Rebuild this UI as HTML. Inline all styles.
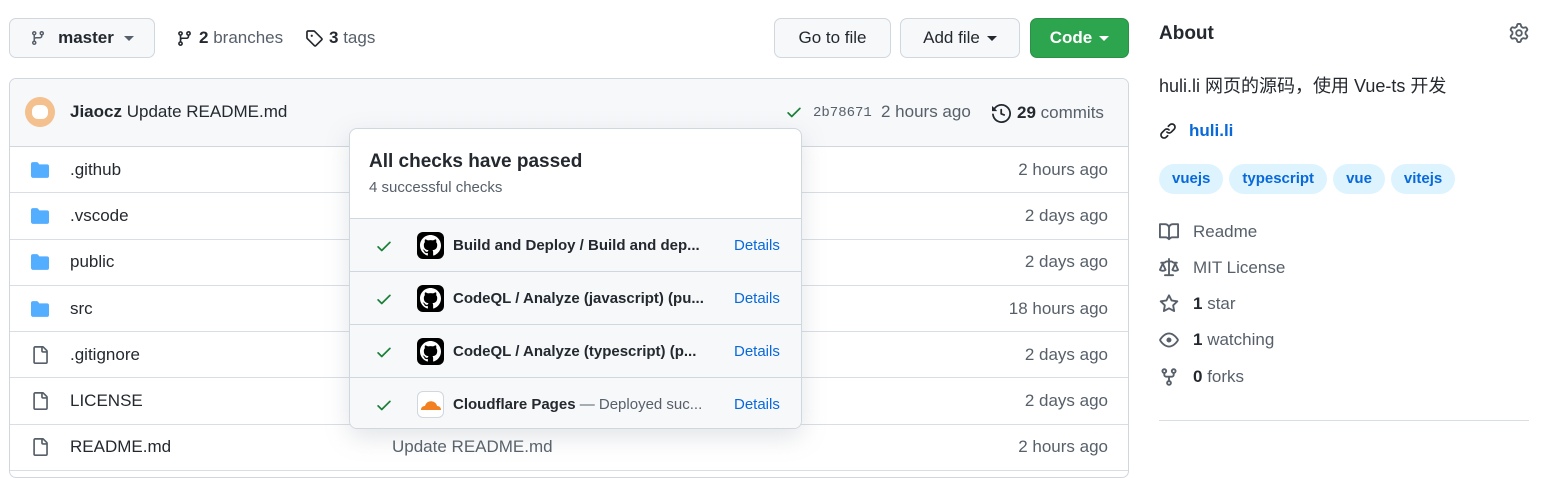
<!DOCTYPE html>
<html><head><meta charset="utf-8"><style>
*{box-sizing:border-box;margin:0;padding:0}
body{width:1541px;height:453px;overflow:hidden;background:#fff;font-family:"Liberation Sans","Noto Sans CJK SC",sans-serif;color:#24292f;font-size:17px;position:relative}
.abs{position:absolute}
.btn{position:absolute;top:18px;height:40px;border:1px solid #d0d7de;border-radius:7px;background:#f6f8fa;font-weight:bold;font-size:17px;display:flex;align-items:center;justify-content:center;color:#24292f}
.caret{display:inline-block;border-left:5px solid transparent;border-right:5px solid transparent;border-top:5px solid currentColor;margin-left:7px}
.box{position:absolute;left:9px;top:78px;width:1120px;height:400px;border:1px solid #d0d7de;border-radius:7px;overflow:hidden}
.hdr{height:68px;background:#f6f8fa;border-bottom:1px solid #d0d7de;position:relative}
.row{height:46.3px;border-bottom:1px solid #d8dee4;position:relative;display:flex;align-items:center}
.row .ic{position:absolute;left:20px}
.row .nm{position:absolute;left:60px}
.row .tm{position:absolute;right:20px;color:#57606a}
.pop{position:absolute;left:349px;top:128px;width:453px;height:301px;background:#fff;border:1px solid #d0d7de;border-radius:8px;box-shadow:0 8px 24px rgba(140,149,159,.25);overflow:hidden}
.prow{height:53px;border-top:1px solid #d0d7de;background:#f6f8fa;position:relative;display:flex;align-items:center;font-size:15px}
.prow .ck{position:absolute;left:25px;top:18px}
.prow .lg{position:absolute;left:67px;top:13px;width:27px;height:27px;border-radius:6px;background:#000;display:flex;align-items:center;justify-content:center}
.prow .t{position:absolute;left:103px;font-weight:bold;color:#24292f}
.prow .d{position:absolute;left:384px;color:#0969da}
.side{position:absolute;left:1159px}
.tag{display:inline-block;background:#ddf4ff;color:#0969da;border-radius:15px;height:30px;line-height:30px;padding:0 13px;font-size:15px;font-weight:bold;margin-right:6px}
.li{position:absolute;left:1159px;display:flex;align-items:center;color:#57606a;font-size:17px}
.li svg{margin-right:14px}
</style></head><body>
<div class="btn" style="left:9px;width:146px"><svg width="16" height="16" viewBox="0 0 16 16" style="margin-right:12px"><path fill="#57606a" d="M9.5 3.25a2.25 2.25 0 1 1 3 2.122V6A2.5 2.5 0 0 1 10 8.5H6a1 1 0 0 0-1 1v1.128a2.251 2.251 0 1 1-1.5 0V5.372a2.25 2.25 0 1 1 1.5 0v1.836A2.493 2.493 0 0 1 6 7h4a1 1 0 0 0 1-1v-.628A2.25 2.25 0 0 1 9.5 3.25Zm-6 0a.75.75 0 1 0 1.5 0 .75.75 0 0 0-1.5 0Zm8.25-.75a.75.75 0 1 0 0 1.5.75.75 0 0 0 0-1.5ZM4.25 12a.75.75 0 1 0 0 1.5.75.75 0 0 0 0-1.5Z"/></svg>master<span class="caret" style="color:#57606a;margin-left:10px"></span></div>
<div class="abs" style="left:176px;top:28px;display:flex;align-items:center"><svg width="17" height="17" viewBox="0 0 16 16" style="margin-right:6px"><path fill="#24292f" d="M9.5 3.25a2.25 2.25 0 1 1 3 2.122V6A2.5 2.5 0 0 1 10 8.5H6a1 1 0 0 0-1 1v1.128a2.251 2.251 0 1 1-1.5 0V5.372a2.25 2.25 0 1 1 1.5 0v1.836A2.493 2.493 0 0 1 6 7h4a1 1 0 0 0 1-1v-.628A2.25 2.25 0 0 1 9.5 3.25Zm-6 0a.75.75 0 1 0 1.5 0 .75.75 0 0 0-1.5 0Zm8.25-.75a.75.75 0 1 0 0 1.5.75.75 0 0 0 0-1.5ZM4.25 12a.75.75 0 1 0 0 1.5.75.75 0 0 0 0-1.5Z"/></svg><b>2</b>&nbsp;<span style="color:#57606a">branches</span></div>
<div class="abs" style="left:305px;top:28px;display:flex;align-items:center"><svg width="18" height="18" viewBox="0 0 16 16" style="margin-right:6px"><path fill="#24292f" d="M1 7.775V2.75C1 1.784 1.784 1 2.75 1h5.025c.464 0 .91.184 1.238.513l6.25 6.25a1.75 1.75 0 0 1 0 2.474l-5.026 5.026a1.75 1.75 0 0 1-2.474 0l-6.25-6.25A1.752 1.752 0 0 1 1 7.775Zm1.5 0c0 .066.026.13.073.177l6.25 6.25a.25.25 0 0 0 .354 0l5.025-5.025a.25.25 0 0 0 0-.354l-6.25-6.25a.25.25 0 0 0-.177-.073H2.75a.25.25 0 0 0-.25.25ZM6 5a1 1 0 1 1 0 2 1 1 0 0 1 0-2Z"/></svg><b>3</b>&nbsp;<span style="color:#57606a">tags</span></div>
<div class="btn" style="left:774px;width:117px;font-weight:normal">Go to file</div>
<div class="btn" style="left:900px;width:120px;font-weight:normal">Add file<span class="caret"></span></div>
<div class="btn" style="left:1030px;width:99px;background:#2da44e;border-color:#2a9147;color:#fff">Code<span class="caret"></span></div>

<div class="box">
<div class="hdr">
<div class="abs" style="left:15px;top:18px;width:30px;height:30px;border-radius:50%;background:#f4c08e"><div style="position:absolute;left:7px;top:8px;width:16px;height:14px;background:#fff;border-radius:6px"></div></div>
<div class="abs" style="left:60px;top:23px"><b>Jiaocz</b> Update README.md</div>
<div class="abs" style="left:775px;top:24px"><svg width="18" height="18" viewBox="0 0 16 16"><path fill="#1a7f37" d="M13.78 4.22a.75.75 0 0 1 0 1.06l-7.25 7.25a.75.75 0 0 1-1.06 0L2.22 9.28a.75.75 0 0 1 1.06-1.06L6 10.94l6.72-6.72a.75.75 0 0 1 1.06 0Z"/></svg></div>
<div class="abs" style="left:803px;top:26px;font-family:'Liberation Mono',monospace;font-size:14px;color:#57606a">2b78671</div>
<div class="abs" style="left:871px;top:23px;color:#57606a">2 hours ago</div>
<div class="abs" style="left:982px;top:24px;display:flex;align-items:center"><svg width="19" height="19" viewBox="0 0 16 16" style="margin-right:6px"><path fill="#24292f" d="m.427 1.927 1.215 1.215a8.002 8.002 0 1 1-1.6 5.685.75.75 0 1 1 1.493-.154 6.5 6.5 0 1 0 1.18-4.458l1.358 1.358A.25.25 0 0 1 3.896 6H.25A.25.25 0 0 1 0 5.75V2.104a.25.25 0 0 1 .427-.177ZM7.75 4a.75.75 0 0 1 .75.75v2.992l2.028.812a.75.75 0 0 1-.557 1.392l-2.5-1A.751.751 0 0 1 7 8.25v-3.5A.75.75 0 0 1 7.75 4Z"/></svg><b>29</b>&nbsp;<span style="color:#57606a">commits</span></div>
</div>
<div class="row"><svg class="ic" width="20" height="18" viewBox="0 0 16 16"><path fill="#54aeff" d="M1.75 1A1.75 1.75 0 0 0 0 2.75v10.5C0 14.216.784 15 1.75 15h12.5A1.75 1.75 0 0 0 16 13.25v-8.5A1.75 1.75 0 0 0 14.25 3H7.5a.25.25 0 0 1-.2-.1l-.9-1.2C6.07 1.26 5.55 1 5 1H1.75Z"/></svg><span class="nm">.github</span><span class="tm">2 hours ago</span></div>
<div class="row"><svg class="ic" width="20" height="18" viewBox="0 0 16 16"><path fill="#54aeff" d="M1.75 1A1.75 1.75 0 0 0 0 2.75v10.5C0 14.216.784 15 1.75 15h12.5A1.75 1.75 0 0 0 16 13.25v-8.5A1.75 1.75 0 0 0 14.25 3H7.5a.25.25 0 0 1-.2-.1l-.9-1.2C6.07 1.26 5.55 1 5 1H1.75Z"/></svg><span class="nm">.vscode</span><span class="tm">2 days ago</span></div>
<div class="row"><svg class="ic" width="20" height="18" viewBox="0 0 16 16"><path fill="#54aeff" d="M1.75 1A1.75 1.75 0 0 0 0 2.75v10.5C0 14.216.784 15 1.75 15h12.5A1.75 1.75 0 0 0 16 13.25v-8.5A1.75 1.75 0 0 0 14.25 3H7.5a.25.25 0 0 1-.2-.1l-.9-1.2C6.07 1.26 5.55 1 5 1H1.75Z"/></svg><span class="nm">public</span><span class="tm">2 days ago</span></div>
<div class="row"><svg class="ic" width="20" height="18" viewBox="0 0 16 16"><path fill="#54aeff" d="M1.75 1A1.75 1.75 0 0 0 0 2.75v10.5C0 14.216.784 15 1.75 15h12.5A1.75 1.75 0 0 0 16 13.25v-8.5A1.75 1.75 0 0 0 14.25 3H7.5a.25.25 0 0 1-.2-.1l-.9-1.2C6.07 1.26 5.55 1 5 1H1.75Z"/></svg><span class="nm">src</span><span class="tm">18 hours ago</span></div>
<div class="row"><svg class="ic" width="20" height="18" viewBox="0 0 16 16"><path fill="#57606a" d="M2 1.75C2 .784 2.784 0 3.75 0h6.586c.464 0 .909.184 1.237.513l2.914 2.914c.329.328.513.773.513 1.237v9.586A1.75 1.75 0 0 1 13.25 16h-9.5A1.75 1.75 0 0 1 2 14.25Zm1.75-.25a.25.25 0 0 0-.25.25v12.5c0 .138.112.25.25.25h9.5a.25.25 0 0 0 .25-.25V6h-2.75A1.75 1.75 0 0 1 9 4.25V1.5Zm6.75.062V4.25c0 .138.112.25.25.25h2.688l-.011-.013-2.914-2.914-.013-.011Z"/></svg><span class="nm">.gitignore</span><span class="tm">2 days ago</span></div>
<div class="row"><svg class="ic" width="20" height="18" viewBox="0 0 16 16"><path fill="#57606a" d="M2 1.75C2 .784 2.784 0 3.75 0h6.586c.464 0 .909.184 1.237.513l2.914 2.914c.329.328.513.773.513 1.237v9.586A1.75 1.75 0 0 1 13.25 16h-9.5A1.75 1.75 0 0 1 2 14.25Zm1.75-.25a.25.25 0 0 0-.25.25v12.5c0 .138.112.25.25.25h9.5a.25.25 0 0 0 .25-.25V6h-2.75A1.75 1.75 0 0 1 9 4.25V1.5Zm6.75.062V4.25c0 .138.112.25.25.25h2.688l-.011-.013-2.914-2.914-.013-.011Z"/></svg><span class="nm">LICENSE</span><span class="tm">2 days ago</span></div>
<div class="row"><svg class="ic" width="20" height="18" viewBox="0 0 16 16"><path fill="#57606a" d="M2 1.75C2 .784 2.784 0 3.75 0h6.586c.464 0 .909.184 1.237.513l2.914 2.914c.329.328.513.773.513 1.237v9.586A1.75 1.75 0 0 1 13.25 16h-9.5A1.75 1.75 0 0 1 2 14.25Zm1.75-.25a.25.25 0 0 0-.25.25v12.5c0 .138.112.25.25.25h9.5a.25.25 0 0 0 .25-.25V6h-2.75A1.75 1.75 0 0 1 9 4.25V1.5Zm6.75.062V4.25c0 .138.112.25.25.25h2.688l-.011-.013-2.914-2.914-.013-.011Z"/></svg><span class="nm">README.md</span><span class="abs" style="left:382px;color:#57606a">Update README.md</span><span class="tm">2 hours ago</span></div>
</div>

<div class="pop">
<div style="height:89px;padding:22px 0 0 19px"><div style="font-size:19px;font-weight:bold">All checks have passed</div><div style="font-size:15px;color:#57606a;margin-top:6px">4 successful checks</div></div>
<div class="prow"><svg class="ck" width="18" height="18" viewBox="0 0 16 16"><path fill="#1a7f37" d="M13.78 4.22a.75.75 0 0 1 0 1.06l-7.25 7.25a.75.75 0 0 1-1.06 0L2.22 9.28a.75.75 0 0 1 1.06-1.06L6 10.94l6.72-6.72a.75.75 0 0 1 1.06 0Z"/></svg><div class="lg"><svg width="21" height="21" viewBox="0 0 16 16"><path fill="#fff" d="M8 0c4.42 0 8 3.58 8 8a8.013 8.013 0 0 1-5.45 7.59c-.4.08-.55-.17-.55-.38 0-.27.01-1.13.01-2.2 0-.75-.25-1.23-.54-1.48 1.78-.2 3.65-.88 3.65-3.95 0-.88-.31-1.59-.82-2.15.08-.2.36-1.02-.08-2.12 0 0-.67-.22-2.2.82-.64-.18-1.32-.27-2-.27-.68 0-1.36.09-2 .27-1.53-1.03-2.2-.82-2.2-.82-.44 1.1-.16 1.92-.08 2.12-.51.56-.82 1.28-.82 2.15 0 3.06 1.86 3.75 3.64 3.95-.23.2-.44.55-.51 1.07-.46.21-1.61.55-2.33-.66-.15-.24-.6-.83-1.23-.82-.67.01-.27.38.01.53.34.19.73.9.82 1.13.16.45.68 1.31 2.69.94 0 .67.01 1.3.01 1.49 0 .21-.15.45-.55.38A7.995 7.995 0 0 1 0 8c0-4.42 3.58-8 8-8Z"/></svg></div><span class="t">Build and Deploy / Build and dep...</span><span class="d">Details</span></div>
<div class="prow"><svg class="ck" width="18" height="18" viewBox="0 0 16 16"><path fill="#1a7f37" d="M13.78 4.22a.75.75 0 0 1 0 1.06l-7.25 7.25a.75.75 0 0 1-1.06 0L2.22 9.28a.75.75 0 0 1 1.06-1.06L6 10.94l6.72-6.72a.75.75 0 0 1 1.06 0Z"/></svg><div class="lg"><svg width="21" height="21" viewBox="0 0 16 16"><path fill="#fff" d="M8 0c4.42 0 8 3.58 8 8a8.013 8.013 0 0 1-5.45 7.590c-.4.08-.55-.17-.55-.38 0-.27.01-1.13.01-2.2 0-.75-.25-1.23-.54-1.48 1.78-.2 3.650-.88 3.65-3.95 0-.88-.31-1.59-.82-2.15.08-.2.36-1.020-.08-2.12 0 0-.67-.22-2.2.82-.64-.18-1.32-.27-2-.27-.68 0-1.36.09-2 .27-1.53-1.03-2.2-.82-2.2-.82-.44 1.1-.16 1.92-.08 2.12-.51.56-.82 1.28-.82 2.15 0 3.06 1.86 3.75 3.64 3.95-.23.2-.44.55-.51 1.07-.46.21-1.61.55-2.33-.66-.15-.24-.6-.83-1.23-.82-.67.01-.27.38.01.53.34.19.73.9.82 1.13.16.45.68 1.31 2.69.94 0 .67.01 1.3.01 1.49 0 .21-.15.45-.55.38A7.995 7.995 0 0 1 0 8c0-4.42 3.58-8 8-8Z"/></svg></div><span class="t">CodeQL / Analyze (javascript) (pu...</span><span class="d">Details</span></div>
<div class="prow"><svg class="ck" width="18" height="18" viewBox="0 0 16 16"><path fill="#1a7f37" d="M13.78 4.22a.75.75 0 0 1 0 1.06l-7.25 7.25a.75.75 0 0 1-1.06 0L2.22 9.28a.75.75 0 0 1 1.06-1.06L6 10.94l6.72-6.72a.75.75 0 0 1 1.06 0Z"/></svg><div class="lg"><svg width="21" height="21" viewBox="0 0 16 16"><path fill="#fff" d="M8 0c4.42 0 8 3.58 8 8a8.013 8.013 0 0 1-5.45 7.59c-.4.08-.55-.17-.55-.38 0-.27.01-1.13.01-2.2 0-.75-.25-1.23-.54-1.48 1.78-.2 3.65-.88 3.65-3.95 0-.88-.31-1.59-.82-2.15.08-.2.36-1.02-.08-2.12 0 0-.67-.22-2.2.82-.64-.18-1.32-.27-2-.27-.68 0-1.36.09-2 .27-1.53-1.03-2.2-.82-2.2-.82-.44 1.1-.16 1.92-.08 2.12-.51.56-.82 1.28-.82 2.15 0 3.06 1.86 3.75 3.64 3.95-.23.2-.44.55-.51 1.07-.46.21-1.61.55-2.33-.66-.15-.24-.6-.83-1.23-.82-.67.01-.27.38.01.53.34.19.73.9.82 1.13.16.45.68 1.31 2.69.94 0 .67.01 1.3.01 1.49 0 .21-.15.45-.55.38A7.995 7.995 0 0 1 0 8c0-4.42 3.58-8 8-8Z"/></svg></div><span class="t">CodeQL / Analyze (typescript) (p...</span><span class="d">Details</span></div>
<div class="prow" style="height:54px"><svg class="ck" width="18" height="18" viewBox="0 0 16 16"><path fill="#1a7f37" d="M13.78 4.22a.75.75 0 0 1 0 1.06l-7.25 7.25a.75.75 0 0 1-1.06 0L2.22 9.28a.75.75 0 0 1 1.06-1.06L6 10.94l6.72-6.72a.75.75 0 0 1 1.06 0Z"/></svg><div class="lg" style="background:#fff;border:1px solid #d0d7de"><svg width="22" height="12" viewBox="0 0 22 12"><path fill="#f38020" d="M1 11c0-3 2-4 4-4 1-4 5-6 9-4 2 1 3 3 3 4 3 0 4 2 4 4Z"/></svg></div><span class="t">Cloudflare Pages <span style="font-weight:normal;color:#57606a">— Deployed suc...</span></span><span class="d">Details</span></div>
</div>

<div class="side" style="top:23px;font-size:19px;font-weight:bold">About</div>
<svg class="abs" style="left:1509px;top:23px" width="20" height="20" viewBox="0 0 16 16"><path fill="#57606a" d="M8 0a8.2 8.2 0 0 1 .701.031C9.444.095 9.99.645 10.16 1.29l.288 1.107c.018.066.079.158.212.224.231.114.454.243.668.386.123.082.233.09.299.071l1.103-.303c.644-.176 1.392.021 1.82.63.27.385.506.792.704 1.218.315.675.111 1.422-.364 1.891l-.814.806c-.049.048-.098.147-.088.294.016.257.016.515 0 .772-.01.147.038.246.088.294l.814.806c.475.469.679 1.216.364 1.891a7.977 7.977 0 0 1-.704 1.217c-.428.61-1.176.807-1.82.63l-1.102-.302c-.067-.019-.177-.011-.3.071a5.909 5.909 0 0 1-.668.386c-.133.066-.194.158-.211.224l-.29 1.106c-.168.646-.715 1.196-1.458 1.26a8.006 8.006 0 0 1-1.402 0c-.743-.064-1.289-.614-1.458-1.26l-.289-1.106c-.018-.066-.079-.158-.212-.224a5.738 5.738 0 0 1-.668-.386c-.123-.082-.233-.09-.299-.071l-1.103.303c-.644.176-1.392-.021-1.82-.63a8.12 8.12 0 0 1-.704-1.218c-.315-.675-.111-1.422.363-1.891l.815-.806c.05-.048.098-.147.088-.294a6.214 6.214 0 0 1 0-.772c.01-.147-.038-.246-.088-.294l-.815-.806C.635 6.045.431 5.298.746 4.623a7.92 7.92 0 0 1 .704-1.217c.428-.61 1.176-.807 1.82-.63l1.102.302c.067.019.177.011.3-.071.214-.143.437-.272.668-.386.133-.066.194-.158.211-.224l.29-1.106C6.009.645 6.556.095 7.299.03 7.53.01 7.764 0 8 0Zm-.571 1.525c-.036.003-.108.036-.137.146l-.289 1.105c-.147.561-.549.967-.998 1.189-.173.086-.34.183-.5.29-.417.278-.97.423-1.529.27l-1.103-.303c-.109-.03-.175.016-.195.045-.22.312-.412.644-.573.99-.014.031-.021.11.059.19l.815.806c.411.406.562.957.53 1.456a4.709 4.709 0 0 0 0 .582c.032.499-.119 1.05-.53 1.456l-.815.806c-.081.08-.073.159-.059.19.162.346.353.677.573.989.02.03.085.076.195.046l1.102-.303c.56-.153 1.113-.008 1.53.27.161.107.328.204.501.29.447.222.85.629.997 1.189l.289 1.105c.029.109.101.143.137.146a6.6 6.6 0 0 0 1.142 0c.036-.003.108-.036.137-.146l.289-1.105c.147-.561.549-.967.998-1.189.173-.086.34-.183.5-.29.417-.278.97-.423 1.529-.27l1.103.303c.109.029.175-.016.195-.045.22-.313.411-.644.573-.99.014-.031.021-.11-.059-.19l-.815-.806c-.411-.406-.562-.957-.53-1.456a4.709 4.709 0 0 0 0-.582c-.032-.499.119-1.05.53-1.456l.815-.806c.081-.08.073-.159.059-.19a6.464 6.464 0 0 0-.573-.989c-.02-.03-.085-.076-.195-.046l-1.102.303c-.56.153-1.113.008-1.53-.27a4.44 4.44 0 0 0-.501-.29c-.447-.222-.85-.629-.997-1.189l-.289-1.105c-.029-.11-.101-.143-.137-.146a6.6 6.6 0 0 0-1.142 0ZM11 8a3 3 0 1 1-6 0 3 3 0 0 1 6 0ZM9.5 8a1.5 1.5 0 1 0-3.001.001A1.5 1.5 0 0 0 9.5 8Z"/></svg>
<div class="side" style="top:72px;font-size:18px">huli.li 网页的源码，使用 Vue-ts 开发</div>
<div class="side" style="top:121px;display:flex;align-items:center"><svg width="18" height="18" viewBox="0 0 16 16" style="margin-right:12px"><path fill="#24292f" d="m7.775 3.275 1.25-1.25a3.5 3.5 0 1 1 4.95 4.95l-2.5 2.5a3.5 3.5 0 0 1-4.95 0 .751.751 0 0 1 .018-1.042.751.751 0 0 1 1.042-.018 1.998 1.998 0 0 0 2.83 0l2.5-2.5a2.002 2.002 0 0 0-2.83-2.83l-1.25 1.25a.751.751 0 0 1-1.042-.018.751.751 0 0 1-.018-1.042Zm-4.69 9.64a1.998 1.998 0 0 0 2.83 0l1.25-1.25a.751.751 0 0 1 1.042.018.751.751 0 0 1 .018 1.042l-1.25 1.25a3.5 3.5 0 1 1-4.95-4.95l2.5-2.5a3.5 3.5 0 0 1 4.95 0 .751.751 0 0 1-.018 1.042.751.751 0 0 1-1.042.018 1.998 1.998 0 0 0-2.83 0l-2.5 2.5a1.998 1.998 0 0 0 0 2.83Z"/></svg><b style="color:#0969da">huli.li</b></div>
<div class="side" style="top:164px"><span class="tag">vuejs</span><span class="tag">typescript</span><span class="tag">vue</span><span class="tag">vitejs</span></div>
<div class="li" style="top:222px"><svg width="20" height="20" viewBox="0 0 16 16"><path fill="#57606a" d="M0 1.75A.75.75 0 0 1 .75 1h4.253c1.227 0 2.317.59 3 1.501A3.743 3.743 0 0 1 11.006 1h4.245a.75.75 0 0 1 .75.75v10.5a.75.75 0 0 1-.75.75h-4.507a2.25 2.25 0 0 0-1.591.659l-.622.621a.75.75 0 0 1-1.06 0l-.622-.621A2.25 2.25 0 0 0 5.258 13H.75a.75.75 0 0 1-.75-.75Zm7.251 10.324.004-5.073-.002-2.253A2.25 2.25 0 0 0 5.003 2.5H1.5v9h3.757a3.75 3.75 0 0 1 1.994.574ZM8.755 4.75l-.004 7.322a3.752 3.752 0 0 1 1.992-.572H14.5v-9h-3.495a2.25 2.25 0 0 0-2.25 2.25Z"/></svg>Readme</div>
<div class="li" style="top:258px"><svg width="20" height="20" viewBox="0 0 16 16"><path fill="#57606a" d="M8.75.75V2h.985c.304 0 .603.08.867.231l1.29.736c.038.022.08.033.124.033h2.234a.75.75 0 0 1 0 1.5h-.427l2.111 4.692a.75.75 0 0 1-.154.838l-.53-.53.529.531-.001.002-.002.002-.006.006-.006.005-.01.01-.045.04c-.21.176-.441.327-.686.45C14.556 10.78 13.88 11 13 11a4.498 4.498 0 0 1-2.023-.454 3.544 3.544 0 0 1-.686-.45l-.045-.04-.016-.015-.006-.006-.004-.004v-.001a.75.75 0 0 1-.154-.838L12.178 4.5h-.162c-.305 0-.604-.079-.868-.231l-1.29-.736a.245.245 0 0 0-.124-.033H8.75V13h2.5a.75.75 0 0 1 0 1.5h-6.5a.75.75 0 0 1 0-1.5h2.5V3.5h-.984a.245.245 0 0 0-.124.033l-1.289.737c-.265.15-.564.23-.869.23h-.162l2.112 4.692a.75.75 0 0 1-.154.838l-.53-.53.529.531-.001.002-.002.002-.006.006-.016.015-.045.04c-.21.176-.441.327-.686.45C4.556 10.78 3.88 11 3 11a4.498 4.498 0 0 1-2.023-.454 3.544 3.544 0 0 1-.686-.45l-.045-.04-.016-.015-.006-.006-.004-.004v-.001a.75.75 0 0 1-.154-.838L2.178 4.5H1.75a.75.75 0 0 1 0-1.5h2.234a.249.249 0 0 0 .125-.033l1.288-.737c.265-.15.564-.23.869-.23h.984V.75a.75.75 0 0 1 1.5 0Zm2.945 8.477c.285.135.718.273 1.305.273s1.02-.138 1.305-.273L13 6.327Zm-10 0c.285.135.718.273 1.305.273s1.02-.138 1.305-.273L3 6.327Z"/></svg>MIT License</div>
<div class="li" style="top:294px"><svg width="20" height="20" viewBox="0 0 16 16"><path fill="#57606a" d="M8 .25a.75.75 0 0 1 .673.418l1.882 3.815 4.21.612a.75.75 0 0 1 .416 1.279l-3.046 2.97.719 4.192a.751.751 0 0 1-1.088.791L8 12.347l-3.766 1.98a.75.75 0 0 1-1.088-.79l.72-4.194L.818 6.374a.75.75 0 0 1 .416-1.28l4.21-.611L7.327.668A.75.75 0 0 1 8 .25Zm0 2.445L6.615 5.5a.75.75 0 0 1-.564.41l-3.097.45 2.24 2.184a.75.75 0 0 1 .216.664l-.528 3.084 2.769-1.456a.75.75 0 0 1 .698 0l2.77 1.456-.53-3.084a.75.75 0 0 1 .216-.664l2.24-2.183-3.096-.45a.75.75 0 0 1-.564-.41L8 2.694Z"/></svg><b style="color:#24292f">1</b>&nbsp;star</div>
<div class="li" style="top:330px"><svg width="20" height="20" viewBox="0 0 16 16"><path fill="#57606a" d="M8 2c1.981 0 3.671.992 4.933 2.078 1.27 1.091 2.187 2.345 2.637 3.023a1.62 1.62 0 0 1 0 1.798c-.45.678-1.367 1.932-2.637 3.023C11.67 13.008 9.981 14 8 14c-1.981 0-3.671-.992-4.933-2.078C1.797 10.83.88 9.576.43 8.898a1.62 1.62 0 0 1 0-1.798c.45-.677 1.367-1.931 2.637-3.022C4.33 2.992 6.019 2 8 2ZM1.679 7.932a.12.12 0 0 0 0 .136c.411.622 1.241 1.75 2.366 2.717C5.176 11.758 6.527 12.5 8 12.5c1.473 0 2.825-.742 3.955-1.715 1.124-.967 1.954-2.096 2.366-2.717a.12.12 0 0 0 0-.136c-.412-.621-1.242-1.75-2.366-2.717C10.824 4.242 9.473 3.5 8 3.5c-1.473 0-2.825.742-3.955 1.715-1.124.967-1.954 2.096-2.366 2.717ZM8 10a2 2 0 1 1-.001-3.999A2 2 0 0 1 8 10Z"/></svg><b style="color:#24292f">1</b>&nbsp;watching</div>
<div class="li" style="top:367px"><svg width="20" height="20" viewBox="0 0 16 16"><path fill="#57606a" d="M5 5.372v.878c0 .414.336.75.75.75h4.5a.75.75 0 0 0 .75-.75v-.878a2.25 2.25 0 1 1 1.5 0v.878a2.25 2.25 0 0 1-2.25 2.25h-1.5v2.128a2.251 2.251 0 1 1-1.5 0V8.5h-1.5A2.25 2.25 0 0 1 3.5 6.25v-.878a2.25 2.25 0 1 1 1.5 0ZM5 3.25a.75.75 0 1 0-1.5 0 .75.75 0 0 0 1.5 0Zm6.75.75a.75.75 0 1 0 0-1.5.75.75 0 0 0 0 1.5Zm-3 8.75a.75.75 0 1 0-1.5 0 .75.75 0 0 0 1.5 0Z"/></svg><b style="color:#24292f">0</b>&nbsp;forks</div>
<div class="abs" style="left:1159px;top:420px;width:370px;height:1px;background:#d8dee4"></div>
</body></html>
